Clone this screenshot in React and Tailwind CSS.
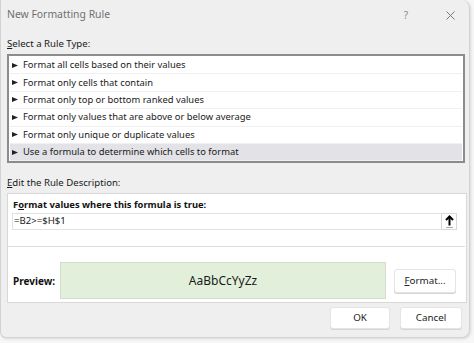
import { useState } from 'react'

const rules = [
  'Format all cells based on their values',
  'Format only cells that contain',
  'Format only top or bottom ranked values',
  'Format only values that are above or below average',
  'Format only unique or duplicate values',
  'Use a formula to determine which cells to format',
]

function Btn({ children, className = '' }) {
  return (
    <button className={`bg-white border border-[#e4e4e4] rounded-[3px] text-[9.8px] text-[#222] shadow-[0_1px_0_#d4d4d4] ${className}`}>
      {children}
    </button>
  )
}

export default function App() {
  const [selected, setSelected] = useState(5)

  return (
    <div
      className="w-[474px] h-[343px] bg-[#f7f7f7] overflow-hidden"
      style={{ fontFamily: '"Noto Sans", "Open Sans", Arial, sans-serif' }}
    >
      <div className="w-[470px] h-[338px] bg-[#efefef] border-x border-b border-[#d2d2d2] rounded-br-[8px] rounded-bl-[6px] rounded-tr-[8px] flex flex-col shadow-[1px_1px_3px_rgba(0,0,0,0.12)]">
        {/* title bar */}
        <div className="h-[30px] shrink-0 flex items-center pl-[6px]">
          <span className="text-[10.4px] text-[#707070]">New Formatting Rule</span>
          <span className="ml-auto text-[10px] text-[#8a8a8a] mr-[38px]">?</span>
          <svg width="9" height="9" viewBox="0 0 9 9" className="mr-[14px]">
            <path d="M0.5 0.5 L8.5 8.5 M8.5 0.5 L0.5 8.5" stroke="#7a7a7a" strokeWidth="1" />
          </svg>
        </div>

        <div className="pl-[6px] flex flex-col">
          <div className="text-[9.6px] text-[#1a1a1a] mt-[7px] leading-[14px]">
            <span className="underline">S</span>elect a Rule Type:
          </div>

          <div className="mt-[3px] bg-white border-2 border-[#8c8c8c] w-[458px] h-[109px] px-px pt-px">
            {rules.map((r, i) => (
              <div
                key={r}
                onClick={() => setSelected(i)}
                className={`h-[17.4px] flex items-center pl-[2px] text-[9.4px] text-[#1a1a1a] border-b border-[#f0f0f0] ${
                  selected === i ? 'bg-[#e2e2e7]' : ''
                }`}
              >
                <svg width="6" height="5" viewBox="0 0 6 5" className="mr-[5px]">
                  <path d="M0 0 L6 2.5 L0 5 Z" fill="#222" />
                </svg>
                {r}
              </div>
            ))}
          </div>

          <div className="text-[9.6px] text-[#1a1a1a] mt-[13px] leading-[14px]">
            <span className="underline">E</span>dit the Rule Description:
          </div>

          <div className="mt-[3px] bg-white border border-[#d8d8d8] w-[460px] h-[110px] flex flex-col">
            <div className="pl-[5px] pt-[4px] text-[9.4px] font-bold text-[#111] leading-[13px]">
              F<span className="underline">o</span>rmat values where this formula is true:
            </div>
            <div className="ml-[4px] mt-[2px] w-[445px] h-[17px] border border-[#e2e2e2] flex items-center pl-[1px]">
              <span className="text-[9.6px] text-[#1a1a1a]">=B2&gt;=$H$1</span>
              <div className="ml-auto w-[16px] h-[17px] -my-px -mr-px border border-[#d8d8d8] bg-white flex items-center justify-center">
                <svg width="9" height="13" viewBox="0 0 9 13">
                  <path d="M4.5 1.5 L4.5 10.5" stroke="#000" strokeWidth="2" />
                  <path d="M1 5 L4.5 1.5 L8 5" stroke="#000" strokeWidth="2" fill="none" />
                  <path d="M1 12.5 L8 12.5" stroke="#aaa" strokeWidth="1" />
                </svg>
              </div>
            </div>
            <div className="mt-[16px] border-t border-[#dedede] mr-px" />
            <div className="flex items-start pl-[5px] mt-[15px]">
              <span className="text-[10px] font-bold text-[#111] w-[47px] leading-[13px] mt-[13px]">Preview:</span>
              <div className="w-[326px] h-[37px] bg-[#e2efda] border border-[#d3dccd] flex items-center justify-center">
                <span className="text-[12px] text-[#1a1a1a]">AaBbCcYyZz</span>
              </div>
              <Btn className="ml-[8px] w-[62px] h-[24px] mt-[7px]">
                <span className="underline">F</span>ormat...
              </Btn>
            </div>
          </div>

          <div className="flex gap-[10px] mt-[4px] pl-[323px]">
            <Btn className="w-[60px] h-[22px]">OK</Btn>
            <Btn className="w-[62px] h-[22px]">Cancel</Btn>
          </div>
        </div>
      </div>
    </div>
  )
}
